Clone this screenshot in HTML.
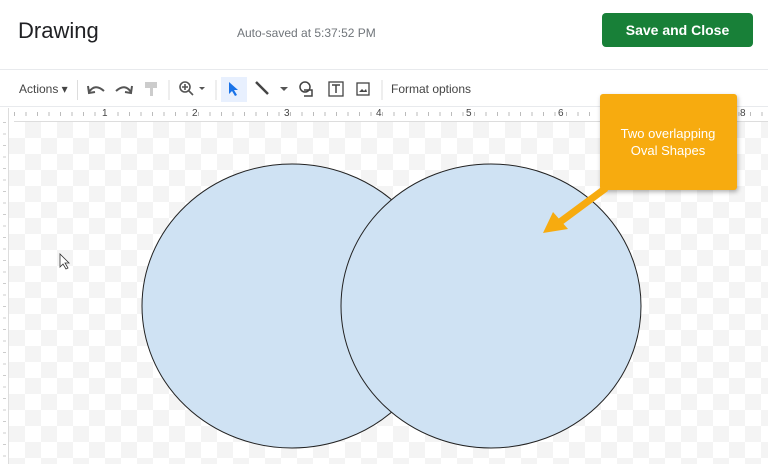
<!DOCTYPE html>
<html><head><style>
body{margin:0;width:768px;height:464px;overflow:hidden;background:#fff;font-family:"Liberation Sans",Arial,sans-serif;position:relative}
.a{position:absolute}
</style></head><body>
<div class="a" style="left:18px;top:18px;font-size:22px;color:#202124">Drawing</div>
<div class="a" style="left:237px;top:26px;font-size:12px;color:#70757a">Auto-saved at 5:37:52 PM</div>
<div class="a" style="left:602px;top:13px;width:151px;height:34px;background:#188038;border-radius:4px;color:#fff;font-size:14px;font-weight:bold;text-align:center;line-height:34px">Save and Close</div>
<div class="a" style="left:0;top:69px;width:768px;height:1px;background:#e8eaed"></div>
<div class="a" style="left:19px;top:82px;font-size:12px;color:#444">Actions ▾</div>
<div class="a" style="left:77px;top:80px;width:1px;height:20px;background:#ddd"></div>
<svg class="a" style="left:0;top:70px" width="480" height="38">
<path d="M89 22 Q95 13 104 21" fill="none" stroke="#555" stroke-width="2"/>
<path d="M88 16 L89 23 L95 22" fill="none" stroke="#555" stroke-width="2"/>
<path d="M131 22 Q125 13 116 21" fill="none" stroke="#555" stroke-width="2"/>
<path d="M132 16 L131 23 L125 22" fill="none" stroke="#555" stroke-width="2"/>
<rect x="145" y="12" width="12" height="6" fill="#ccc"/>
<rect x="150" y="18" width="3" height="8" fill="#ccc"/>
<line x1="169" y1="10" x2="169" y2="30" stroke="#ddd"/>
<circle cx="185" cy="17" r="5" fill="none" stroke="#555" stroke-width="1.6"/>
<path d="M182 17 H188 M185 14 V20 M189 21 L193 25" stroke="#555" stroke-width="1.6"/>
<path d="M199 17 L205 17 L202 20 Z" fill="#555"/>
<line x1="216" y1="10" x2="216" y2="30" stroke="#ddd"/>
<rect x="221" y="7" width="26" height="25" fill="#e8f0fe"/>
<path d="M229 12 L229 24 L232 21 L235 26 L237 25 L234 20 L238 20 Z" fill="#1a73e8"/>
<path d="M256 12 L268 24" stroke="#444" stroke-width="2.5"/>
<path d="M280 17 L288 17 L284 21 Z" fill="#555"/>
<circle cx="305" cy="17" r="5" fill="none" stroke="#444" stroke-width="1.5"/>
<path d="M304 20 H312 V26 H304" fill="none" stroke="#444" stroke-width="1.5"/>
<rect x="329" y="12" width="14" height="14" fill="none" stroke="#444" stroke-width="1.3"/>
<path d="M332 15 H340 M336 15 V23" stroke="#444" stroke-width="1.5"/>
<rect x="357" y="13" width="12" height="12" fill="none" stroke="#444" stroke-width="1.3"/>
<path d="M359 22 L362 19 L364 21 L366 19 L367 22Z" fill="#444"/>
<line x1="382" y1="10" x2="382" y2="30" stroke="#ddd"/>
</svg>
<div class="a" style="left:391px;top:82px;font-size:12px;color:#444">Format options</div>
<div class="a" style="left:0;top:106px;width:768px;height:1px;background:#e8eaed"></div>
<div class="a" style="left:14px;top:108px;width:754px;height:13px;background:#fff;border-bottom:1px solid #ddd;font-size:10px;color:#444">
<div class="a" style="left:0;top:4px;width:754px;height:4px;background:repeating-linear-gradient(90deg,#bbb 0 1px,transparent 1px 11.5px)"></div>
<span class="a" style="left:88px;top:0;background:#fff">1</span><span class="a" style="left:178px;top:0;background:#fff">2</span><span class="a" style="left:270px;top:0;background:#fff">3</span><span class="a" style="left:362px;top:0;background:#fff">4</span><span class="a" style="left:452px;top:0;background:#fff">5</span><span class="a" style="left:544px;top:0;background:#fff">6</span><span class="a" style="left:726px;top:0;background:#fff">8</span>
</div>
<div class="a" style="left:0;top:108px;width:8px;height:356px;border-right:1px solid #ddd"></div>
<div class="a" style="left:3px;top:122px;width:3px;height:342px;background:repeating-linear-gradient(180deg,#ccc 0 1px,transparent 1px 11.5px)"></div>
<div class="a" style="left:9px;top:122px;width:759px;height:342px;background:repeating-conic-gradient(#f4f4f4 0 25%,#fff 0 50%) 0 0/32px 32px"></div>
<svg class="a" style="left:0;top:0" width="768" height="464">
<ellipse cx="292" cy="306" rx="150" ry="142" fill="#cfe2f3" stroke="#222" stroke-width="1"/>
<ellipse cx="491" cy="306" rx="150" ry="142" fill="#cfe2f3" stroke="#222" stroke-width="1"/>
<path d="M60 254 L60 267 L63 264 L66 269 L68 268 L65 263 L69 263 Z" fill="#fff" stroke="#333" stroke-width="0.8"/>
<rect x="600" y="94" width="137" height="96" rx="3" fill="#f7ab0f" style="filter:drop-shadow(1px 2px 2px rgba(0,0,0,.3))"/>
<path d="M606 188 L560 222" stroke="#f7ab0f" stroke-width="7"/>
<path d="M543 233 L553 212 L568 229 Z" fill="#f7ab0f"/>
<text x="668" y="138" fill="#fff" font-size="13" text-anchor="middle" font-family="Liberation Sans">Two overlapping</text>
<text x="668" y="155" fill="#fff" font-size="13" text-anchor="middle" font-family="Liberation Sans">Oval Shapes</text>
</svg>
</body></html>
